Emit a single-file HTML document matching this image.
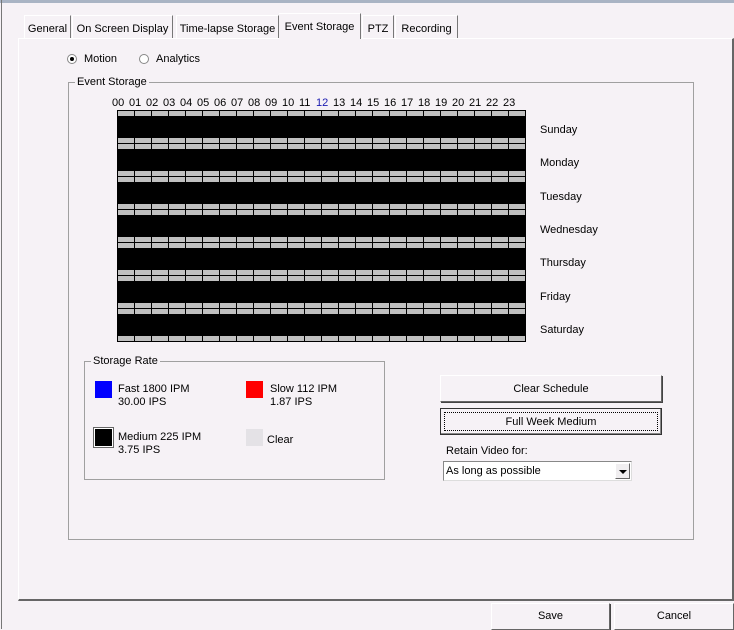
<!DOCTYPE html>
<html><head><style>
*{margin:0;padding:0;box-sizing:border-box}
body{width:734px;height:629px;background:#f6f2f6;font-family:"Liberation Sans",sans-serif;font-size:11px;color:#000;position:relative;overflow:hidden}
.a{position:absolute}
.tab{position:absolute;top:15px;height:23px;border-right:1px solid #777;border-left:1px solid #fff;border-top:1px solid #fff;padding-top:7px;text-align:center;white-space:nowrap}
.grp{position:absolute;border:1px solid #a0a0a0}
.lbl{position:absolute;background:#f6f2f6;padding:0 2px}
.strip{height:6px;border-top:1px solid #000;background:repeating-linear-gradient(90deg,#000 0 1px,#c0c0c0 1px 17px)}
.day{height:33px}
.btn{position:absolute;border:1px solid #fff;border-right-color:#666;border-bottom-color:#666;box-shadow:1px 1px 0 #444;text-align:center;background:#f6f2f6}
.d{position:absolute;left:540px}
.hr span{display:inline-block;width:17px}
</style></head><body>
<div class="a" style="left:0;top:0;width:734px;height:3px;background:#a9b4c4"></div>
<div class="a" style="left:1px;top:0;width:1px;height:629px;background:#777"></div>
<div class="a" style="left:18px;top:38px;width:716px;height:563px;border-top:1px solid #fff;border-left:1px solid #fff;border-right:2px solid #666;border-bottom:2px solid #666"></div>
<div class="tab" style="left:24px;width:47px">General</div>
<div class="tab" style="left:72px;width:101px">On Screen Display</div>
<div class="tab" style="left:176px;width:103px">Time-lapse Storage</div>
<div class="tab" style="left:279px;top:13px;height:26px;width:82px;background:#f6f2f6;border-left:none;padding-top:7px">Event Storage</div>
<div class="tab" style="left:362px;width:32px">PTZ</div>
<div class="tab" style="left:395px;width:63px">Recording</div>

<div class="a" style="left:67px;top:54px;width:10px;height:10px;border-radius:50%;border:1px solid #888;background:#fff"><div class="a" style="left:2px;top:2px;width:4px;height:4px;border-radius:50%;background:#000"></div></div>
<div class="a" style="left:84px;top:53px">Motion</div>
<div class="a" style="left:139px;top:54px;width:10px;height:10px;border-radius:50%;border:1px solid #888;background:#fff"></div>
<div class="a" style="left:156px;top:53px">Analytics</div>

<div class="grp" style="left:68px;top:82px;width:626px;height:458px"></div>
<div class="lbl" style="left:75px;top:76px">Event Storage</div>

<div class="a hr" style="left:112px;top:97px;white-space:nowrap"><span>00</span><span>01</span><span>02</span><span>03</span><span>04</span><span>05</span><span>06</span><span>07</span><span>08</span><span>09</span><span>10</span><span>11</span><span style="color:#1a1ab0">12</span><span>13</span><span>14</span><span>15</span><span>16</span><span>17</span><span>18</span><span>19</span><span>20</span><span>21</span><span>22</span><span>23</span></div>

<div class="a" style="left:117px;top:110px;width:409px;height:232px;background:#000">
<div class="day"><div class="strip"></div><div style="height:21px"></div><div class="strip"></div></div>
<div class="day"><div class="strip"></div><div style="height:21px"></div><div class="strip"></div></div>
<div class="day"><div class="strip"></div><div style="height:21px"></div><div class="strip"></div></div>
<div class="day"><div class="strip"></div><div style="height:21px"></div><div class="strip"></div></div>
<div class="day"><div class="strip"></div><div style="height:21px"></div><div class="strip"></div></div>
<div class="day"><div class="strip"></div><div style="height:21px"></div><div class="strip"></div></div>
<div class="day"><div class="strip"></div><div style="height:21px"></div><div class="strip"></div></div>
</div>
<div class="d" style="top:124px">Sunday</div>
<div class="d" style="top:157px">Monday</div>
<div class="d" style="top:191px">Tuesday</div>
<div class="d" style="top:224px">Wednesday</div>
<div class="d" style="top:257px">Thursday</div>
<div class="d" style="top:291px">Friday</div>
<div class="d" style="top:324px">Saturday</div>

<div class="grp" style="left:84px;top:361px;width:301px;height:119px"></div>
<div class="lbl" style="left:91px;top:355px">Storage Rate</div>
<div class="a" style="left:95px;top:381px;width:17px;height:17px;background:#0000ff"></div>
<div class="a" style="left:118px;top:383px;line-height:13px">Fast 1800 IPM<br>30.00 IPS</div>
<div class="a" style="left:246px;top:381px;width:17px;height:17px;background:#ff0000"></div>
<div class="a" style="left:270px;top:383px;line-height:13px">Slow 112 IPM<br>1.87 IPS</div>
<div class="a" style="left:93px;top:427px;width:21px;height:21px;border:1px solid #666;background:#fff;padding:1px"><div style="width:17px;height:17px;background:#000"></div></div>
<div class="a" style="left:118px;top:431px;line-height:13px">Medium 225 IPM<br>3.75 IPS</div>
<div class="a" style="left:246px;top:429px;width:17px;height:17px;background:#e4e2e6"></div>
<div class="a" style="left:267px;top:434px">Clear</div>

<div class="btn" style="left:440px;top:375px;width:222px;height:27px;padding-top:7px">Clear Schedule</div>
<div class="btn" style="left:440px;top:408px;width:222px;height:27px;padding-top:7px;border:1px solid #333;box-shadow:inset -1px -1px 0 #888"><div style="position:absolute;left:3px;top:3px;right:3px;bottom:3px;border:1px dotted #000"></div>Full Week Medium</div>
<div class="a" style="left:446px;top:445px">Retain Video for:</div>
<div class="a" style="left:443px;top:461px;width:189px;height:20px;background:#fff;border:1px solid #888;border-right-color:#ddd;border-bottom-color:#ddd;padding:3px 0 0 2px">As long as possible
<div class="a" style="right:1px;top:1px;width:15px;height:16px;background:#f0eef0;border:1px solid #fff;border-right-color:#666;border-bottom-color:#666"><div class="a" style="left:3px;top:6px;width:0;height:0;border-left:4px solid transparent;border-right:4px solid transparent;border-top:4px solid #000"></div></div></div>

<div class="btn" style="left:491px;top:603px;width:119px;height:27px;padding-top:6px">Save</div>
<div class="btn" style="left:614px;top:603px;width:120px;height:27px;padding-top:6px">Cancel</div>
</body></html>
